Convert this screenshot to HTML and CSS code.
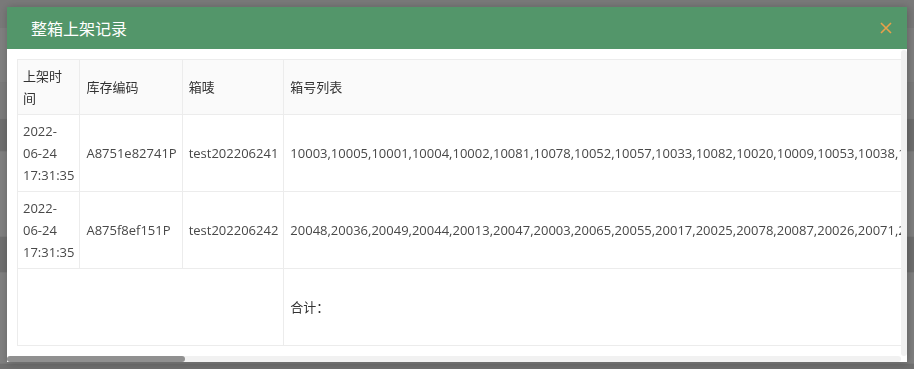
FILE: index.html
```html
<!DOCTYPE html>
<html lang="zh-CN">
<head>
    <meta charset="UTF-8">
    <meta name="viewport" content="width=device-width, initial-scale=1.0">
    <title>整箱上架记录</title>
    <link rel="stylesheet" href="styles.css">
</head>
<body>
    <div class="page">
        <div class="topbar"></div>
        <div class="row"></div>
        <div class="row light"></div>
        <div class="row dark"></div>
        <div class="row tall"></div>
        <div class="row dark short"></div>
        <div class="row last"></div>
        <div class="row dark"></div>
    </div>

    <div class="shade"></div>

    <div class="dialog">
        <div class="dialog-head">
            <span class="dialog-title">整箱上架记录</span>
            <span class="dialog-close">
                <svg width="12" height="12" viewBox="0 0 12 12"><path d="M1 1 L11 11 M11 1 L1 11" stroke="#e9a04a" stroke-width="1.6" fill="none"/></svg>
            </span>
        </div>
        <div class="dialog-main">
            <div class="viewport">
                <table class="record-table">
                    <thead>
                        <tr>
                            <th class="c-time">上架时间</th>
                            <th class="c-code">库存编码</th>
                            <th class="c-mark">箱唛</th>
                            <th class="c-list">箱号列表</th>
                        </tr>
                    </thead>
                    <tbody>
                        <tr>
                            <td class="c-time">2022-06-24 17:31:35</td>
                            <td class="c-code">A8751e82741P</td>
                            <td class="c-mark">test202206241</td>
                            <td class="c-list">10003,10005,10001,10004,10002,10081,10078,10052,10057,10033,10082,10020,10009,10053,10038,10011,10064,10027,10090,10046,10015,10072,10006,10099,10041,10060,10018,10087,10030,10069,10007,10048,10095,10024,10059,10013,10076,10036,10092,10045,10021,10084,10067,10008,10050,10031,10098,10062,10016,10074,10039,10089,10025,10056,10012,10080,10043,10070,10019,10094,10035,10066,10010,10085,10047,10028,10061,10097,10014,10073,10040,10088,10023,10058,10032,10077,10049,10100,10017,10065,10037,10091,10026,10054,10071,10022,10086,10044,10063,10029,10093,10051,10068,10034,10083,10042,10096,10075,10079,10055,</td>
                        </tr>
                        <tr>
                            <td class="c-time">2022-06-24 17:31:35</td>
                            <td class="c-code">A875f8ef151P</td>
                            <td class="c-mark">test202206242</td>
                            <td class="c-list">20048,20036,20049,20044,20013,20047,20003,20065,20055,20017,20025,20078,20087,20026,20071,20011,20064,20027,20090,20046,20015,20072,20006,20099,20041,20060,20018,20088,20030,20069,20007,20095,20024,20059,20076,20092,20045,20021,20084,20067,20008,20050,20031,20098,20062,20016,20074,20039,20089,20056,20012,20080,20043,20070,20019,20094,20035,20066,20010,20085,20028,20061,20097,20014,20073,20040,20023,20058,20032,20077,20100,20037,20091,20054,20022,20086,20063,20029,20093,20051,20068,20034,20083,20042,20096,20075,20079,20001,20002,20004,20005,20009,20020,20033,20038,</td>
                        </tr>
                        <tr class="total">
                            <td colspan="3"></td>
                            <td class="c-list">合计：</td>
                        </tr>
                    </tbody>
                </table>
            </div>
            <div class="vbar"></div>
            <div class="hbar"><div class="hthumb"></div></div>
            <div class="corner"></div>
        </div>
    </div>
</body>
</html>
```

FILE: styles.css
```css
body { margin: 0; font-family: "Open Sans", "Noto Sans CJK SC", sans-serif; font-size: 13px; background: #fff; }

.page { height: 369px; overflow: hidden; }
.topbar { height: 28px; background: #f3f3f3; }
.row { height: 54px; background: #fff; border-bottom: 1px solid #f4f4f4; }
.row.light { height: 35px; background: #f6f6f6; }
.row.dark { height: 32px; background: #dedede; }
.row.tall { height: 84px; }
.row.short { height: 35px; }
.row.last { height: 90px; }

.shade { position: fixed; left: 0; top: 0; right: 0; bottom: 0; background: rgba(0, 0, 0, 0.5); }

.dialog { position: fixed; left: 7px; top: 7px; width: 900px; height: 355px; background: #fff; overflow: hidden; box-shadow: 1px 1px 8px rgba(0, 0, 0, 0.25); }
.dialog-head { height: 42px; background: #53966a; color: #fff; display: flex; align-items: center; justify-content: space-between; padding: 0 15px 0 24px; font-size: 16px; }
.dialog-close { display: flex; cursor: pointer; }

.dialog-main { display: grid; grid-template-columns: 894px 6px; grid-template-rows: 306px 6px; padding-top: 1px; }
.viewport { width: 884px; height: 297px; overflow: hidden; padding: 9px 0 0 10px; }
.vbar { background: #f1f1f1; border-radius: 3px; }
.hbar { background: #f1f1f1; border-radius: 3px; }
.hthumb { width: 178px; height: 6px; background: #909090; border-radius: 3px; }
.corner { background: #fff; }

.record-table { border-collapse: collapse; }
.record-table th, .record-table td { border: 1px solid #ececec; padding: 5px 5px 5px 6px; line-height: 22px; text-align: left; vertical-align: middle; font-weight: normal; }
.record-table th { background: #fafafa; color: #333; }
.record-table td { color: #484848; }
.record-table .c-time { width: 51px; padding-left: 5px; }
.c-code { width: 92px; white-space: nowrap; }
.c-mark { width: 91px; white-space: nowrap; }
.c-list { white-space: nowrap; }
.total td { height: 66px; color: #333; }
```
